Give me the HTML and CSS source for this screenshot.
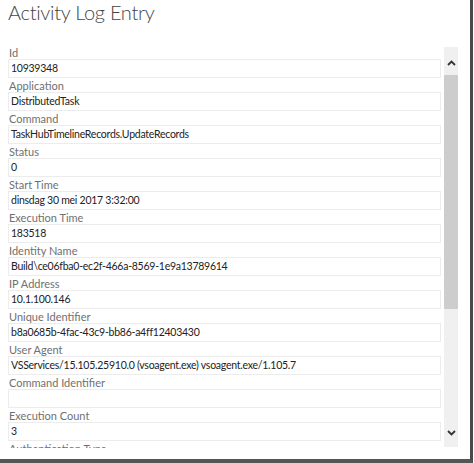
FILE: index.html
```html
<!DOCTYPE html>
<html>
<head>
<meta charset="utf-8">
<link rel="stylesheet" href="styles.css">
</head>
<body>
<div class="window">
  <h1 class="title">Activity Log Entry</h1>
  <div class="scroller">
    <div class="fields">
      <div class="field"><div class="label">Id</div><div class="value">10939348</div></div>
      <div class="field"><div class="label">Application</div><div class="value">DistributedTask</div></div>
      <div class="field"><div class="label">Command</div><div class="value">TaskHubTimelineRecords.UpdateRecords</div></div>
      <div class="field"><div class="label">Status</div><div class="value">0</div></div>
      <div class="field"><div class="label">Start Time</div><div class="value">dinsdag 30 mei 2017 3:32:00</div></div>
      <div class="field"><div class="label">Execution Time</div><div class="value">183518</div></div>
      <div class="field"><div class="label">Identity Name</div><div class="value">Build\ce06fba0-ec2f-466a-8569-1e9a13789614</div></div>
      <div class="field"><div class="label">IP Address</div><div class="value">10.1.100.146</div></div>
      <div class="field"><div class="label">Unique Identifier</div><div class="value">b8a0685b-4fac-43c9-bb86-a4ff12403430</div></div>
      <div class="field"><div class="label">User Agent</div><div class="value">VSServices/15.105.25910.0 (vsoagent.exe) vsoagent.exe/1.105.7</div></div>
      <div class="field"><div class="label">Command Identifier</div><div class="value"></div></div>
      <div class="field"><div class="label">Execution Count</div><div class="value">3</div></div>
      <div class="field"><div class="label">Authentication Type</div><div class="value"></div></div>
    </div>
    <div class="scrollbar">
      <div class="arrow">
        <svg width="9" height="6" viewBox="0 0 9 6"><path d="M1 5 L4.5 1.5 L8 5" fill="none" stroke="#333" stroke-width="1.8"/></svg>
      </div>
      <div class="thumb"></div>
      <div class="track"></div>
      <div class="arrow">
        <svg width="9" height="6" viewBox="0 0 9 6"><path d="M1 1 L4.5 4.5 L8 1" fill="none" stroke="#333" stroke-width="1.8"/></svg>
      </div>
    </div>
  </div>
</div>
</body>
</html>
```
FILE: styles.css
```css
html, body {
  margin: 0;
  padding: 0;
  background: #ffffff;
}
body {
  font-family: Lato, "Open Sans", sans-serif;
  color: #333;
}
.window {
  box-sizing: border-box;
  width: 473px;
  height: 463px;
  background: #fff;
  border-right: 3px solid #4a4a4a;
  border-bottom: 4px solid #555;
  padding-left: 8px;
}
.title {
  margin: 0;
  height: 45px;
  font-size: 20px;
  font-weight: 300;
  letter-spacing: -0.3px;
  line-height: 25px;
  color: #454545;
}
.scroller {
  display: flex;
  gap: 3px;
  height: 403px;
}
.fields {
  width: 433px;
  height: 403px;
  overflow: hidden;
}
.field {
  display: flex;
  flex-direction: column;
}
.label {
  height: 14px;
  line-height: 14px;
  font-size: 11px;
  color: #707070;
  padding-left: 1px;
  padding-top: 1px;
  box-sizing: border-box;
  white-space: nowrap;
}
.value {
  box-sizing: border-box;
  height: 19px;
  border: 1px solid #ececec;
  font-size: 10.5px;
  letter-spacing: -0.25px;
  line-height: 17px;
  padding-left: 2px;
  color: #222;
  white-space: nowrap;
  overflow: hidden;
}
.scrollbar {
  width: 14px;
  margin-top: 2px;
  height: 400px;
  background: #f0f0f0;
  display: flex;
  flex-direction: column;
}
.arrow {
  height: 28px;
  display: flex;
  align-items: center;
  justify-content: center;
}
.arrow:first-child {
  padding-top: 3px;
  box-sizing: border-box;
}
.thumb {
  height: 234px;
  background: #cdcdcd;
}
.track {
  flex: 1;
}
```
